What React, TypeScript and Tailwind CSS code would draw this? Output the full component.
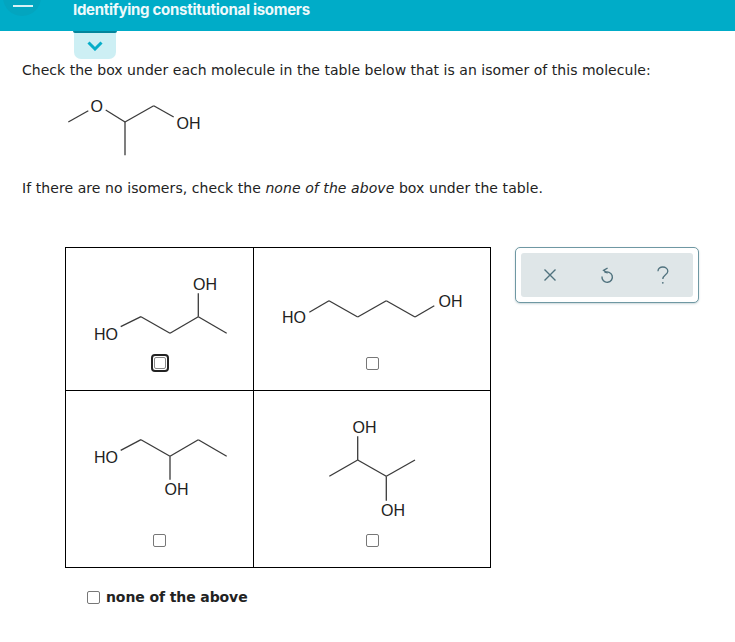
const labelFont = "'Liberation Sans', Arial, sans-serif";

type Bond = [number, number, number, number];
type Label = [string, number, number];

interface MoleculeProps {
  box: [number, number, number, number];
  bonds: Bond[];
  labels: Label[];
}

// box and bonds are in page pixels, read off the reference
function Molecule({ box, bonds, labels }: MoleculeProps) {
  return (
    <svg
      className="block shrink-0"
      width={box[2]}
      height={box[3]}
      viewBox={box.join(" ")}
    >
      {bonds.map((b, i) => (
        <line key={i} x1={b[0]} y1={b[1]} x2={b[2]} y2={b[3]} stroke="#3a3a3a" strokeWidth="1.3" />
      ))}
      {labels.map((l, i) => (
        <text key={i} x={l[1]} y={l[2]} fontSize="16" fill="#222" fontFamily={labelFont}>
          {l[0]}
        </text>
      ))}
    </svg>
  );
}

function Box() {
  return <span className="block w-[13px] h-[13px] rounded-[2px] border border-[#777] bg-white" />;
}

export default function App() {
  return (
    <div className="w-[735px] h-[642px] bg-white overflow-hidden font-['DejaVu_Sans',Verdana,sans-serif] text-[#222]">
      {/* header */}
      <div className="h-[31px] bg-[#00acc8] flex items-start relative overflow-hidden">
        <div className="absolute left-[3px] top-[-22px] w-[38px] h-[38px] rounded-full bg-[#03a5bf]" />
        <div className="absolute left-[13px] top-[5px] w-[20px] h-[2px] bg-[#d8f2f6]" />
        <span className="ml-[73px] mt-[1px] text-[15px] leading-[18px] font-bold tracking-[-0.28px] text-[#eef9fb] font-['Inter',sans-serif]">
          Identifying constitutional isomers
        </span>
      </div>

      {/* collapse tab */}
      <div className="relative ml-[74px] w-[42px] h-[28px] rounded-b-[7px] bg-[#cdeff4] flex items-center justify-center">
        <div className="absolute left-[-1px] right-[-1px] top-0 h-[2px] rounded-b-[2px] bg-[#04849b]" />
        <svg width="16" height="10" viewBox="0 0 16 10" className="mt-[2px]">
          <path d="M1.5 1.5 L8 8 L14.5 1.5" fill="none" stroke="#06aec9" strokeWidth="3" />
        </svg>
      </div>

      <p className="ml-[22px] mt-[2px] text-[14px] leading-[18px] tracking-[0.03px] whitespace-nowrap">
        Check the box under each molecule in the table below that is an isomer of this molecule:
      </p>

      <div className="mt-[9px]">
        <Molecule
          box={[0, 88, 300, 72]}
          bonds={[
            [68.3, 122, 88.3, 110.7],
            [105.7, 110, 125, 122],
            [125, 122, 153.7, 105.7],
            [153.7, 105.7, 173.7, 117],
            [125, 122, 125, 155.3],
          ]}
          labels={[
            ["O", 90.5, 112],
            ["OH", 176.5, 129],
          ]}
        />
      </div>

      <p className="ml-[22px] mt-[19px] text-[14px] leading-[18px] tracking-[0.075px] whitespace-nowrap">
        If there are no isomers, check the <em>none of the above</em> box under the table.
      </p>

      <div className="flex items-start mt-[50px] ml-[65px]">
        {/* molecule table */}
        <div className="grid grid-cols-[188px_237px] grid-rows-[143px_177px] w-[426px] border-t border-l border-black">
          <div className="border-r border-b border-black flex flex-col items-center">
            <Molecule
              box={[66, 248, 187, 102]}
              bonds={[
                [120.7, 326.7, 141, 316.7],
                [141, 316.7, 170, 333.3],
                [170, 333.3, 198.3, 316.7],
                [198.3, 316.7, 226.7, 333.3],
                [198.3, 316.7, 198.3, 293.3],
              ]}
              labels={[
                ["HO", 94, 340],
                ["OH", 193, 290],
              ]}
            />
            <span className="block mt-[4px] rounded-[4px] border-[2px] border-[#222] p-[1px]">
              <span className="block w-[12px] h-[12px] rounded-[2px] border border-[#888] bg-white" />
            </span>
          </div>
          <div className="border-r border-b border-black flex flex-col items-center">
            <Molecule
              box={[254, 248, 236, 109]}
              bonds={[
                [309.3, 312.3, 329, 300.7],
                [329, 300.7, 357.7, 317],
                [357.7, 317, 386.3, 300.7],
                [386.3, 300.7, 415, 317],
                [415, 317, 434.3, 305.7],
              ]}
              labels={[
                ["HO", 282, 323],
                ["OH", 438.5, 307],
              ]}
            />
            <Box />
          </div>
          <div className="border-r border-b border-black flex flex-col items-center">
            <Molecule
              box={[66, 391, 187, 143]}
              bonds={[
                [120.7, 450.3, 141, 439.7],
                [141, 439.7, 170, 456.3],
                [170, 456.3, 198.3, 439.7],
                [198.3, 439.7, 226.7, 456.3],
                [170, 456.3, 170, 479.7],
              ]}
              labels={[
                ["HO", 94, 463],
                ["OH", 164.5, 495],
              ]}
            />
            <Box />
          </div>
          <div className="border-r border-b border-black flex flex-col items-center">
            <Molecule
              box={[254, 391, 236, 143]}
              bonds={[
                [357.7, 436.3, 357.7, 460],
                [329.3, 476.3, 357.7, 460],
                [357.7, 460, 386.3, 476.3],
                [386.3, 476.3, 415, 460],
                [386.3, 476.3, 386.3, 500.7],
              ]}
              labels={[
                ["OH", 352.5, 433],
                ["OH", 381, 516],
              ]}
            />
            <Box />
          </div>
        </div>

        {/* answer tools */}
        <div className="ml-[24px] w-[184px] h-[56px] rounded-[5px] border border-[#6f98a3] bg-white p-[5px] shadow-[0_1px_2px_rgba(80,120,130,0.3)]">
          <div className="h-full rounded-[3px] bg-[#dfe6e8] flex items-center justify-between text-[#50727e] pl-[22px] pr-[24px]">
            <svg width="14" height="14" viewBox="0 0 14 14" fill="none" stroke="currentColor" strokeWidth="1.4">
              <path d="M1.5 1.5 L12.5 12.5 M12.5 1.5 L1.5 12.5" />
            </svg>
            <svg width="14" height="17" viewBox="0 0 14 17" fill="none" stroke="currentColor" strokeWidth="1.4">
              <path d="M4.6 5.6 A5.2 5.2 0 1 1 2 9.5" />
              <path d="M7.6 1 L3.6 3.4 L7.6 6.2" />
            </svg>
            <svg width="12" height="19" viewBox="0 0 12 19" fill="none" stroke="currentColor" strokeWidth="1.3">
              <path d="M1 5.2 C1 2.6 3.2 1 5.8 1 C8.6 1 10.8 2.7 10.8 5.2 C10.8 8.6 5.8 8.8 5.8 13" />
              <circle cx="5.8" cy="16.8" r="0.9" fill="currentColor" stroke="none" />
            </svg>
          </div>
        </div>
      </div>

      <label className="flex items-center ml-[87px] mt-[20px]">
        <Box />
        <span className="ml-[6px] text-[14px] leading-[18px] font-bold tracking-[-0.1px]">none of the above</span>
      </label>
    </div>
  );
}
